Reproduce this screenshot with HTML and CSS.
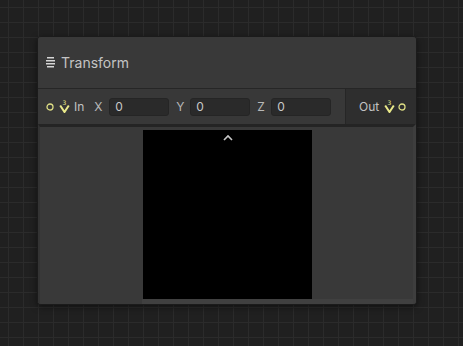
FILE: index.html
```html
<!DOCTYPE html>
<html>
    <head>
        <title>Transform Node</title>
        <link rel="stylesheet" href="styles.css">
    </head>
    <body>
        <div class="node">
            <div class="node-title">
                <svg class="title-icon" width="9" height="11" viewBox="0 0 9 11">
                    <rect x="1" y="0" width="7" height="1.5" fill="#d6d6d6"/>
                    <rect x="0" y="3" width="9" height="1.5" fill="#d6d6d6"/>
                    <rect x="0" y="6" width="9" height="1.5" fill="#d6d6d6"/>
                    <rect x="1" y="9" width="7" height="1.5" fill="#d6d6d6"/>
                </svg>
                <span class="title-text">Transform</span>
            </div>

            <div class="node-ports">
                <div class="inputs">
                    <svg class="port-dot" width="8" height="8" viewBox="0 0 8 8">
                        <circle cx="4" cy="4" r="3" fill="none" stroke="#dede84" stroke-width="1.3"/>
                    </svg>
                    <svg class="vec3" width="11" height="13" viewBox="0 0 11 13">
                        <text x="5.5" y="5" font-size="6" font-family="DejaVu Sans" fill="#eaea8a" text-anchor="middle">3</text>
                        <path d="M1.2 5.5 L5.5 12 L9.8 5.5" fill="none" stroke="#eaea8a" stroke-width="2"/>
                    </svg>
                    <span class="port-label">In</span>
                    <span class="axis first">X</span>
                    <div class="field">0</div>
                    <span class="axis">Y</span>
                    <div class="field">0</div>
                    <span class="axis">Z</span>
                    <div class="field">0</div>
                </div>
                <div class="outputs">
                    <span class="port-label">Out</span>
                    <svg class="vec3" width="11" height="13" viewBox="0 0 11 13">
                        <text x="5.5" y="5" font-size="6" font-family="DejaVu Sans" fill="#eaea8a" text-anchor="middle">3</text>
                        <path d="M1.2 5.5 L5.5 12 L9.8 5.5" fill="none" stroke="#eaea8a" stroke-width="2"/>
                    </svg>
                    <svg class="port-dot" width="8" height="8" viewBox="0 0 8 8">
                        <circle cx="4" cy="4" r="3" fill="none" stroke="#dede84" stroke-width="1.3"/>
                    </svg>
                </div>
            </div>

            <div class="node-body">
                <div class="preview">
                    <svg class="caret" width="10" height="7" viewBox="0 0 10 7">
                        <path d="M1 6 L5 2 L9 6" fill="none" stroke="#c8c8c8" stroke-width="1.6"/>
                    </svg>
                </div>
                <div class="preview-foot"></div>
            </div>
        </div>
    </body>
</html>
```

FILE: styles.css
```css
body{
    margin: 0;
    height: 346px;
    background-color: #202020;
    background-image:
        linear-gradient(to right, #2b2b2b 1px, transparent 1px),
        linear-gradient(to bottom, #2b2b2b 1px, transparent 1px);
    background-size: 15px 15px;
    background-position: 8px 7px;
    font-family: "Inter", "Roboto", sans-serif;
    overflow: hidden;
}

.node{
    position: relative;
    top: 36px;
    margin-left: 37px;
    width: 378px;
    height: 267px;
    background-color: #393939;
    border: solid 1px #1b1b1b;
    border-radius: 4px;
    box-shadow: 0 2px 6px rgba(0, 0, 0, 0.5);
    display: flex;
    flex-direction: column;
    overflow: hidden;
}

.node-title{
    height: 51px;
    display: flex;
    align-items: center;
    padding-left: 8px;
    background-color: #393939;
}

.title-icon{
    margin-right: 6px;
}

.title-text{
    color: #c4c4c4;
    font-size: 14px;
}

.node-ports{
    height: 35px;
    display: flex;
    border-top: solid 1px #262626;
}

.inputs{
    flex: 1;
    display: flex;
    align-items: center;
    padding-left: 8px;
    background-color: #383838;
}

.outputs{
    width: 57px;
    display: flex;
    align-items: center;
    padding-left: 13px;
    background-color: #2e2e2e;
    border-left: solid 1px #262626;
}

.port-dot{
    flex: none;
}

.inputs .vec3{
    margin-left: 5px;
    margin-right: 4px;
}

.outputs .vec3{
    margin-left: 5px;
    margin-right: 3px;
}

.port-label{
    color: #c2c2c2;
    font-size: 12px;
}

.axis{
    color: #b8b8b8;
    font-size: 12px;
    width: 8px;
    margin-left: 7px;
    margin-right: 6px;
}

.axis.first{
    margin-left: 10px;
    margin-right: 7px;
}

.field{
    box-sizing: border-box;
    width: 60px;
    height: 18px;
    line-height: 16px;
    padding-left: 5px;
    background-color: #2a2a2a;
    border: solid 1px #252525;
    border-radius: 3px;
    color: #c8c8c8;
    font-size: 12px;
}

.node-body{
    flex: 1;
    border-top: solid 3px #242424;
    background-color: #393939;
    border-left: solid 2px #333333;
    border-right: solid 3px #3e3e3e;
    display: flex;
    flex-direction: column;
    align-items: center;
    padding-top: 3px;
}

.preview{
    width: 169px;
    height: 169px;
    background-color: #000000;
    display: flex;
    justify-content: center;
    align-items: flex-start;
    margin-left: 1px;
}

.caret{
    margin-top: 4px;
    margin-left: 1px;
}

.preview-foot{
    align-self: stretch;
    flex: 1;
    background-color: #404040;
    margin-left: 102px;
}
```
